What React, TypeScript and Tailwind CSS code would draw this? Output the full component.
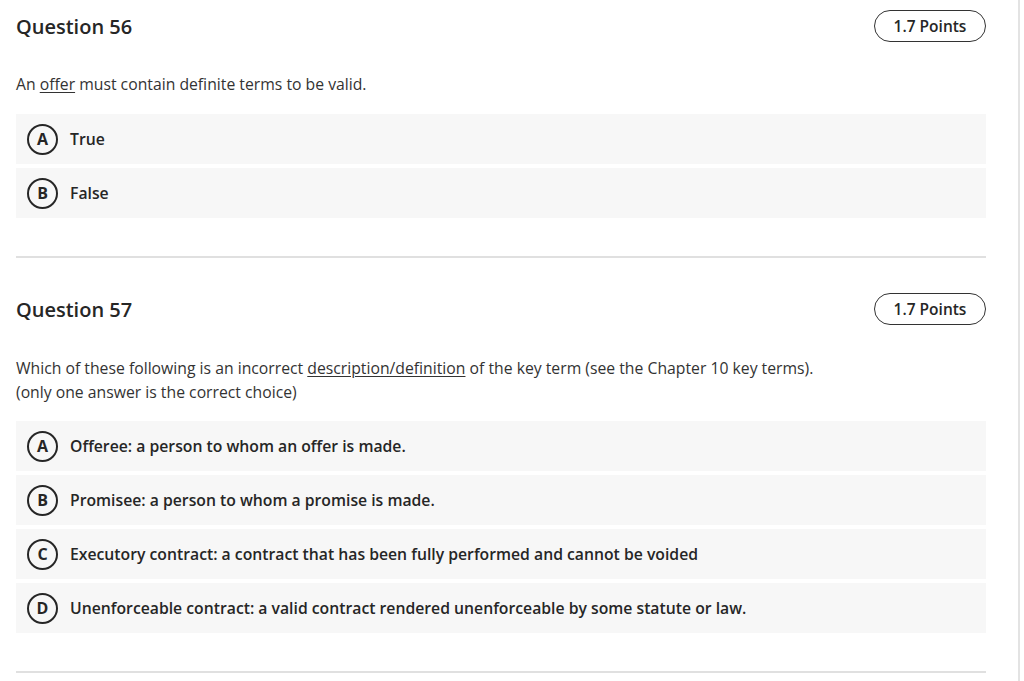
const font = { fontFamily: '"Open Sans", "Noto Sans", sans-serif' };

type Option = { letter: string; text: string };

function Choice({ letter, text }: Option) {
  return (
    <div className="flex h-[50px] items-center gap-[12px] bg-[#f7f7f7] pl-[11px]">
      <span className="flex h-[31px] w-[31px] shrink-0 items-center justify-center rounded-full border-2 border-[#262626] text-[16px] leading-none font-bold text-[#262626]">
        {letter}
      </span>
      <span className="pt-px text-[15.75px] font-semibold text-[#262626]">{text}</span>
    </div>
  );
}

function Header({ title }: { title: string }) {
  return (
    <div className="flex items-center justify-between">
      <h2 className="pt-px text-[20px] font-semibold text-[#262626]">{title}</h2>
      <div className="flex h-[32px] w-[112px] items-center justify-center rounded-full border border-[#333] pt-px text-[15.5px] font-semibold text-[#262626]">
        1.7 Points
      </div>
    </div>
  );
}

export default function App() {
  return (
    <div className="h-[681px] w-[1024px] overflow-hidden bg-white" style={font}>
      <div className="h-full w-[1020px] border-r-2 border-[#e3e3e3]">
        <div className="w-[986px] pl-4 pt-[10px]">
          <Header title="Question 56" />
          <p className="mt-[30px] text-[15.75px] leading-6 text-[#333]">
            An <span className="underline underline-offset-2">offer</span> must contain definite terms to be valid.
          </p>
          <div className="mt-[18px] flex flex-col gap-1">
            <Choice letter="A" text="True" />
            <Choice letter="B" text="False" />
          </div>
          <div className="mt-[38px] h-[2px] bg-[#e0e0e0]" />

          <div className="mt-[35px]">
            <Header title="Question 57" />
          </div>
          <p className="mt-[31px] text-[15.75px] leading-6 text-[#333]">
            Which of these following is an incorrect{" "}
            <span className="underline underline-offset-2">description/definition</span> of the key term (see the Chapter 10 key terms).
            <br />
            (only one answer is the correct choice)
          </p>
          <div className="mt-[17px] flex flex-col gap-1">
            <Choice letter="A" text="Offeree: a person to whom an offer is made." />
            <Choice letter="B" text="Promisee: a person to whom a promise is made." />
            <Choice letter="C" text="Executory contract: a contract that has been fully performed and cannot be voided" />
            <Choice letter="D" text="Unenforceable contract: a valid contract rendered unenforceable by some statute or law." />
          </div>
          <div className="mt-[38px] h-[2px] bg-[#e0e0e0]" />
        </div>
      </div>
    </div>
  );
}
